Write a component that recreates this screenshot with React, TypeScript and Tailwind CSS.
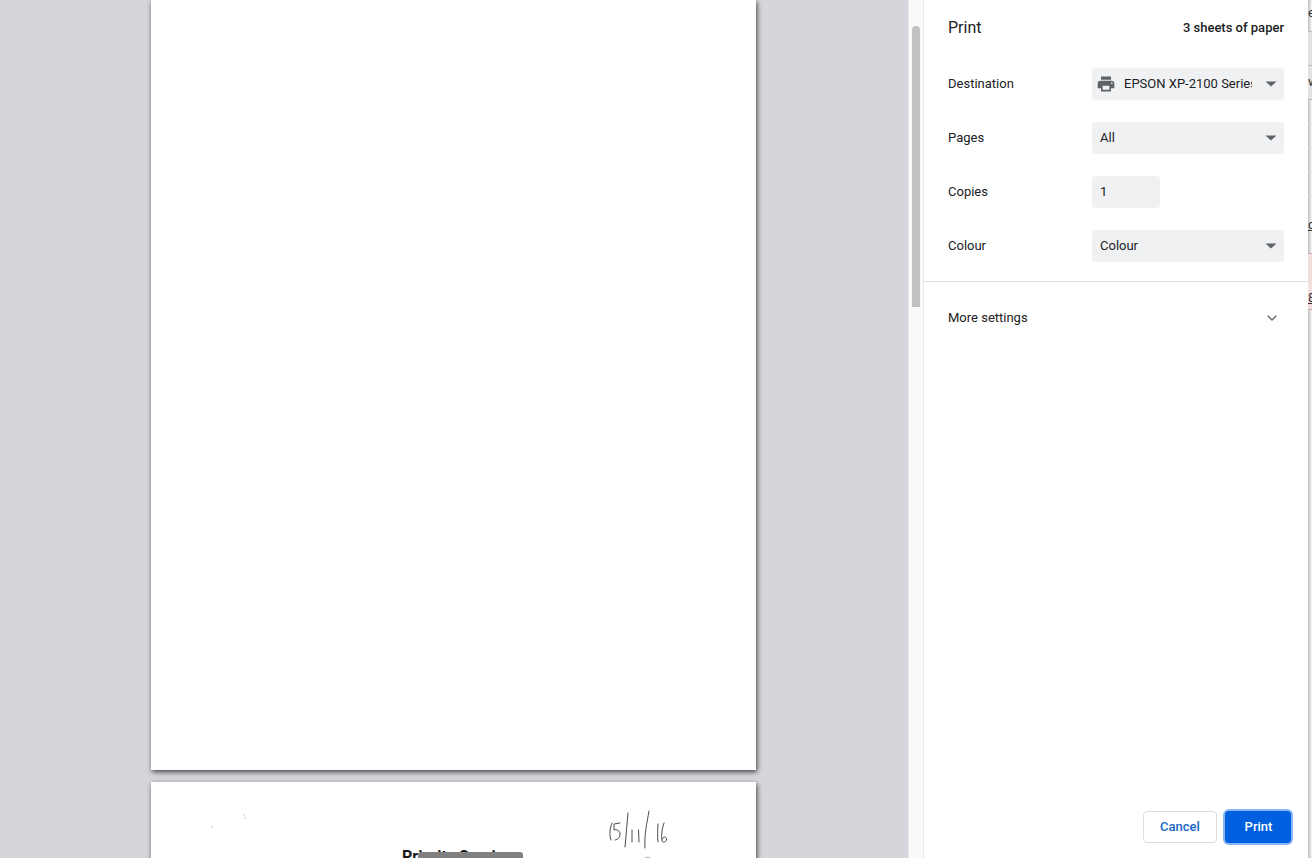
import React from 'react';
import { ChevronDown } from 'lucide-react';

const fontStyle = "font-['Roboto',sans-serif]";

const Arrow = () => (
    <svg width="12" height="6" viewBox="0 0 12 6" className="shrink-0">
        <path d="M0.5 0.5h11L6 5.5z" fill="#5f6368" />
    </svg>
);

const PrinterIcon = () => (
    <svg width="20" height="20" viewBox="0 0 24 24" className="shrink-0" fill="#5f6368">
        <path d="M19 8H5c-1.66 0-3 1.34-3 3v6h4v4h12v-4h4v-6c0-1.66-1.34-3-3-3zm-3 11H8v-5h8v5zm3-7c-.55 0-1-.45-1-1s.45-1 1-1 1 .45 1 1-.45 1-1 1zm-1-9H6v4h12V3z" />
    </svg>
);

const Row: React.FC<{ label: string; children: React.ReactNode }> = ({ label, children }) => (
    <div className="flex h-[54px] items-center">
        <div className="w-[144px] text-[13px] text-[#202124]">{label}</div>
        {children}
    </div>
);

const Select: React.FC<{ value: string }> = ({ value }) => (
    <div className="flex h-8 w-[192px] items-center justify-between rounded bg-[#f0f1f3] pl-2 pr-[7px] text-[13px] text-[#202124]">
        <span>{value}</span>
        <Arrow />
    </div>
);

// the date written by hand on the scanned page
const Handwriting = () => (
    <svg width="100" height="53" viewBox="0 0 100 53" fill="none" stroke="#4a4d50" strokeWidth="1" strokeLinecap="round" className="mt-[23px] mr-[66px] shrink-0">
        <path d="M22 18c-2 5-3 11-1 17" />
        <path d="M30 18l-6 1v6c3-1 6 1 6 4 0 3-2 6-5 6" />
        <path d="M38 8c-1 10-2 24-3 34" />
        <path d="M42 25v12" />
        <path d="M48.500 25l.5 12" />
        <path d="M59 6c-2 12-5 24-4 37" />
        <path d="M68 19c-.5 6-.5 13 0 18" />
        <path d="M74 18c-2 5-3 13-2 18 1 2 4 1 4.500-1 .5-2-1-3-2-3-1 0-2 1-2 2" />
        <path d="M55 52.500q2.500-1 5 0" stroke="#b5b5b5" />
    </svg>
);

export default function App() {
    return (
        <div className={`flex h-[858px] w-[1312px] overflow-hidden bg-white ${fontStyle}`}>
            {/* preview pane */}
            <div className="flex h-full w-[908px] shrink-0 flex-col gap-3 overflow-hidden bg-[#d5d6db] pl-[151px]">
                <div className="h-[770px] w-[605px] shrink-0 bg-white shadow-[1px_2px_5px_rgba(0,0,0,0.7)]" />
                <div className="relative flex h-[90px] w-[605px] shrink-0 justify-between bg-white shadow-[1px_2px_5px_rgba(0,0,0,0.7)]">
                    <div className="flex gap-2">
                        <svg width="100" height="40" viewBox="0 0 100 40" className="mt-6" fill="#bdbdbd">
                            <circle cx="61" cy="21" r="0.8" />
                            <circle cx="93" cy="9" r="0.7" />
                            <circle cx="94" cy="12" r="0.7" />
                        </svg>
                        <div className="mt-[67px] ml-[143px] whitespace-nowrap text-base leading-none font-bold text-[#1a1a1a]">Priority Service</div>
                    </div>
                    <Handwriting />
                    <div className="absolute top-[70px] left-[267px] h-10 w-[105px] rounded-t-[3px] bg-[#808080]" />
                </div>
            </div>

            {/* scrollbar */}
            <div className="h-full w-[15px] shrink-0 border-l border-[#e8e8e8] bg-[#fafafa] pt-[26px] pl-[3px]">
                <div className="h-[281px] w-2 rounded-t bg-[#c1c1c1]" />
            </div>

            {/* settings sidebar */}
            <div className="flex h-full w-[385px] shrink-0 flex-col border-l border-[#e8e8e8] bg-white">
                <div className="flex h-[57px] items-center justify-between px-6 pb-px">
                    <div className="text-base text-[#202124]">Print</div>
                    <div className="text-[13px] font-medium text-[#202124]">3 sheets of paper</div>
                </div>
                <div className="px-6">
                    <Row label="Destination">
                        <div className="flex h-8 w-[192px] items-center rounded bg-[#f0f1f3] pl-1 pr-[7px] text-[13px] text-[#202124]">
                            <PrinterIcon />
                            <span className="ml-2 w-[128px] overflow-hidden whitespace-nowrap">EPSON XP-2100 Series</span>
                            <span className="ml-auto"><Arrow /></span>
                        </div>
                    </Row>
                    <Row label="Pages"><Select value="All" /></Row>
                    <Row label="Copies">
                        <div className="flex h-8 w-[68px] items-center rounded bg-[#f0f1f3] pl-2 text-[13px] text-[#202124]">1</div>
                    </Row>
                    <Row label="Colour"><Select value="Colour" /></Row>
                </div>
                <div className="mt-2 border-t border-[#e0e0e0]" />
                <div className="flex h-[71px] items-center justify-between pl-6 pr-7 text-[13px] text-[#202124]">
                    <span>More settings</span>
                    <ChevronDown size={16} color="#5f6368" strokeWidth={2} />
                </div>
                <div className="flex-1" />
                <div className="flex justify-end gap-2 pr-[17px] pb-[15px]">
                    <button className="h-8 w-[74px] rounded border border-[#dadce0] bg-white text-[13px] font-medium text-[#1a66c8]">Cancel</button>
                    <button className="h-8 w-[66px] rounded bg-[#0060df] pl-px text-[13px] font-medium text-white ring-2 ring-[#8ab4f8]">Print</button>
                </div>
            </div>

            {/* page behind the dialog */}
            <div className="h-full w-1 shrink-0 overflow-hidden bg-[#f4f4f4] text-[13px] text-[#333] shadow-[inset_2px_0_2px_rgba(0,0,0,0.2)]">
                <div className="h-[31px] pt-[5px] leading-4">e</div>
                <div className="h-[34px] border-t border-[#bdbdbd] bg-[#e2e2e2]" />
                <div className="h-[34px] border-t border-[#bdbdbd] bg-[#e2e2e2] pt-2 leading-4">w</div>
                <div className="h-[25px] border-t border-[#bdbdbd]" />
                <div className="h-6 border-t border-[#d8d8d8]" />
                <div className="h-6 border-t border-[#d8d8d8]" />
                <div className="h-6 border-t border-[#d8d8d8]" />
                <div className="h-[57px] border-t border-[#d8d8d8] pt-5 leading-4 underline">c</div>
                <div className="h-[57px] border-t border-b border-[#c9a9a9] bg-[#f2dede] pt-[36px] leading-4 underline">8</div>
            </div>
        </div>
    );
}
